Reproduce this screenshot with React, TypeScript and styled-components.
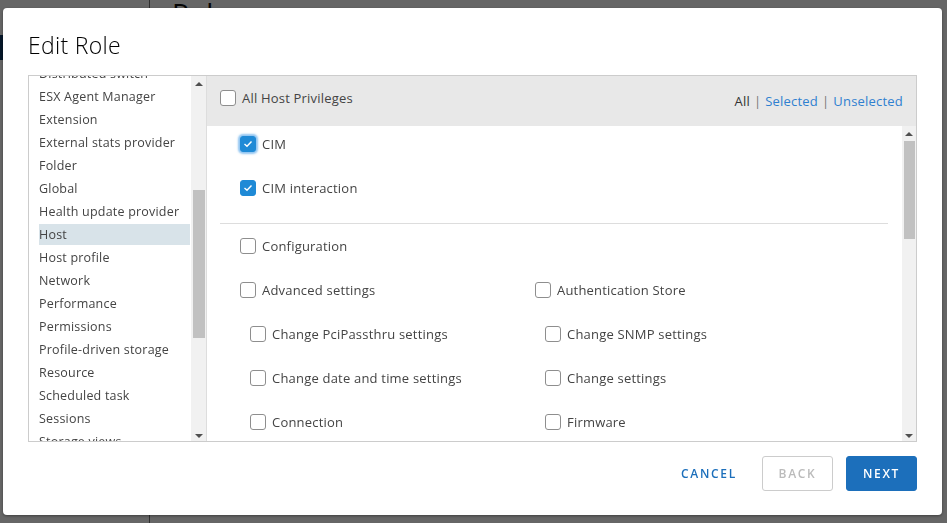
import styled, { createGlobalStyle } from "styled-components";

const GlobalStyle = createGlobalStyle`
  html, body {
    margin: 0;
    padding: 0;
    background: #fff;
    font-family: "Open Sans", "Liberation Sans", sans-serif;
  }
  * { box-sizing: border-box; }
`;

const Page = styled.div`
  width: 947px;
  height: 523px;
  display: grid;
  grid-template-columns: 150px 1fr;
  overflow: hidden;
`;

const SideNav = styled.div`
  border-right: 1px solid #777;
  padding-top: 35px;

  .active {
    height: 25px;
    background: #0d3866;
  }
`;

const BgMain = styled.div`
  padding: 0 0 0 22px;

  h1 {
    margin: -4px 0 0;
    font-size: 28px;
    line-height: 34px;
    font-weight: 400;
    color: #111;
  }
`;

const Overlay = styled.div`
  position: fixed;
  inset: 0;
  background: rgba(0, 0, 0, 0.6);
  display: flex;
  align-items: center;
  padding-left: 3px;
`;

const Modal = styled.div`
  width: 939px;
  height: 507px;
  background: #fff;
  border-radius: 4px;
  box-shadow: 0 1px 3px rgba(0, 0, 0, 0.4);
  display: flex;
  flex-direction: column;
  padding: 0 25px 0 25px;
`;

const Title = styled.h3`
  margin: 0;
  height: 67px;
  padding-top: 23px;
  font-size: 23px;
  line-height: 28px;
  font-weight: 300;
  color: #000;
  letter-spacing: 0.3px;
`;

const Box = styled.div`
  height: 367px;
  border: 1px solid #ccc;
  display: grid;
  grid-template-columns: 177px 1fr;
  overflow: hidden;
`;

const ListPane = styled.div`
  display: flex;
  overflow: hidden;
`;

const ListViewport = styled.div`
  flex: 1;
  overflow: hidden;
  padding: 0 1px 0 10px;
`;

const ListInner = styled.ul`
  list-style: none;
  margin: -13px 0 0;
  padding: 0;
  display: flex;
  flex-direction: column;
  gap: 2px;
`;

const ListItem = styled.li<{ $active?: boolean }>`
  height: 21px;
  line-height: 21px;
  font-size: 12.5px;
  letter-spacing: 0.2px;
  color: #444;
  white-space: nowrap;
  background: ${(p) => (p.$active ? "#d8e3e9" : "transparent")};
`;

const Scrollbar = styled.div<{ $thumbTop: number; $thumbHeight: number }>`
  width: ${(p) => (p.$thumbHeight > 100 ? 15 : 14)}px;
  background: #f1f1f1;
  position: relative;
  flex-shrink: 0;

  .thumb {
    margin: ${(p) => p.$thumbTop}px 1px 0 2px;
    height: ${(p) => p.$thumbHeight}px;
    background: #c1c1c1;
  }
`;

const Arrow = styled.div<{ $down?: boolean }>`
  position: absolute;
  left: 50%;
  ${(p) => (p.$down ? "bottom: 6px;" : "top: 6px;")}
  transform: translateX(-50%);
  width: 0;
  height: 0;
  border-left: 4px solid transparent;
  border-right: 4px solid transparent;
  ${(p) =>
    p.$down ? "border-top: 4px solid #505050;" : "border-bottom: 4px solid #505050;"}
`;

const RightPane = styled.div`
  border-left: 1px solid #ddd;
  display: flex;
  flex-direction: column;
  min-width: 0;
`;

const Header = styled.div`
  height: 50px;
  background: #e8e8e8;
  display: flex;
  align-items: center;
  justify-content: space-between;
  padding: 0 13px 6px;
  flex-shrink: 0;
`;

const Filters = styled.div`
  display: flex;
  align-items: center;
  gap: 4px;
  font-size: 13px;
  letter-spacing: 0.2px;
  padding-top: 5px;

  span.sep {
    color: #777;
  }
`;

const FilterLink = styled.a<{ $current?: boolean }>`
  color: ${(p) => (p.$current ? "#333" : "#2f80d0")};
  text-decoration: none;
  cursor: pointer;
`;

const ContentArea = styled.div`
  flex: 1;
  display: flex;
  overflow: hidden;
`;

const ContentViewport = styled.div`
  flex: 1;
  overflow: hidden;
`;

const ContentInner = styled.div`
  margin-top: -4px;
  padding-left: 33px;
`;

const Divider = styled.hr`
  border: 0;
  border-top: 1px solid #ddd;
  margin: 13px 14px 0 -20px;
  height: 0;
`;

const Grid = styled.div`
  display: grid;
  grid-template-columns: 295px 1fr;
`;

const Row = styled.label<{ $indent?: boolean }>`
  height: 44px;
  display: flex;
  align-items: center;
  gap: 6px;
  padding-left: ${(p) => (p.$indent ? 10 : 0)}px;
  font-size: 13px;
  letter-spacing: 0.2px;
  color: #444;
  white-space: nowrap;
`;

const Box16 = styled.span<{ $checked?: boolean; $focus?: boolean }>`
  width: 16px;
  height: 16px;
  border-radius: 3px;
  flex-shrink: 0;
  display: flex;
  align-items: center;
  justify-content: center;
  border: 1px solid ${(p) => (p.$checked ? "#1f8ad6" : "#8e8e8e")};
  background: ${(p) => (p.$checked ? "#1f8ad6" : "#fff")};
  box-shadow: ${(p) => (p.$focus ? "0 0 2px 2px rgba(54, 149, 229, 0.55)" : "none")};
`;

const Check = ({ checked, focus }: { checked?: boolean; focus?: boolean }) => (
  <Box16 $checked={checked} $focus={focus}>
    {checked && (
      <svg width="10" height="8" viewBox="0 0 10 8">
        <path d="M1.5 4 L4 6.3 L8.5 1.5" fill="none" stroke="#fff" strokeWidth="1.4" />
      </svg>
    )}
  </Box16>
);

const Footer = styled.div`
  flex: 1;
  display: flex;
  justify-content: flex-end;
  align-items: flex-start;
  padding-top: 14px;
  gap: 13px;
`;

const Button = styled.button<{ $variant: "flat" | "outline" | "primary" }>`
  height: 35px;
  min-width: 71px;
  padding: 0 8px;
  border-radius: 3px;
  font-family: inherit;
  font-size: 12px;
  font-weight: 600;
  letter-spacing: 1.7px;
  text-transform: uppercase;
  cursor: pointer;
  border: 1px solid
    ${(p) => (p.$variant === "outline" ? "#ccc" : p.$variant === "primary" ? "#1c6fbb" : "transparent")};
  background: ${(p) => (p.$variant === "primary" ? "#1c6fbb" : "transparent")};
  color: ${(p) =>
    p.$variant === "primary" ? "#fff" : p.$variant === "outline" ? "#bbb" : "#1c6fbb"};
  margin-right: ${(p) => (p.$variant === "flat" ? 3 : 0)}px;
`;

const categories = [
  "Distributed switch",
  "ESX Agent Manager",
  "Extension",
  "External stats provider",
  "Folder",
  "Global",
  "Health update provider",
  "Host",
  "Host profile",
  "Network",
  "Performance",
  "Permissions",
  "Profile-driven storage",
  "Resource",
  "Scheduled task",
  "Sessions",
  "Storage views",
];

const pairs: [string, string, boolean][] = [
  ["Advanced settings", "Authentication Store", false],
  ["Change PciPassthru settings", "Change SNMP settings", true],
  ["Change date and time settings", "Change settings", true],
  ["Connection", "Firmware", true],
];

export default function App() {
  return (
    <>
      <GlobalStyle />
      <Page>
        <SideNav>
          <div className="active" />
        </SideNav>
        <BgMain>
          <h1>Roles</h1>
        </BgMain>
      </Page>
      <Overlay>
        <Modal>
          <Title>Edit Role</Title>
          <Box>
            <ListPane>
              <ListViewport>
                <ListInner>
                  {categories.map((c) => (
                    <ListItem key={c} $active={c === "Host"}>
                      {c}
                    </ListItem>
                  ))}
                </ListInner>
              </ListViewport>
              <Scrollbar $thumbTop={114} $thumbHeight={148}>
                <Arrow />
                <div className="thumb" />
                <Arrow $down />
              </Scrollbar>
            </ListPane>
            <RightPane>
              <Header>
                <Row>
                  <Check />
                  All Host Privileges
                </Row>
                <Filters>
                  <FilterLink $current>All</FilterLink>
                  <span className="sep">|</span>
                  <FilterLink>Selected</FilterLink>
                  <span className="sep">|</span>
                  <FilterLink>Unselected</FilterLink>
                </Filters>
              </Header>
              <ContentArea>
                <ContentViewport>
                  <ContentInner>
                    <Row>
                      <Check checked focus />
                      CIM
                    </Row>
                    <Row>
                      <Check checked />
                      CIM interaction
                    </Row>
                    <Divider />
                    <Row>
                      <Check />
                      Configuration
                    </Row>
                    <Grid>
                      {pairs.flatMap(([a, b, indent]) => [
                        <Row key={a} $indent={indent}>
                          <Check />
                          {a}
                        </Row>,
                        <Row key={b} $indent={indent}>
                          <Check />
                          {b}
                        </Row>,
                      ])}
                    </Grid>
                  </ContentInner>
                </ContentViewport>
                <Scrollbar $thumbTop={15} $thumbHeight={98}>
                  <Arrow />
                  <div className="thumb" />
                  <Arrow $down />
                </Scrollbar>
              </ContentArea>
            </RightPane>
          </Box>
          <Footer>
            <Button $variant="flat">Cancel</Button>
            <Button $variant="outline">Back</Button>
            <Button $variant="primary">Next</Button>
          </Footer>
        </Modal>
      </Overlay>
    </>
  );
}
